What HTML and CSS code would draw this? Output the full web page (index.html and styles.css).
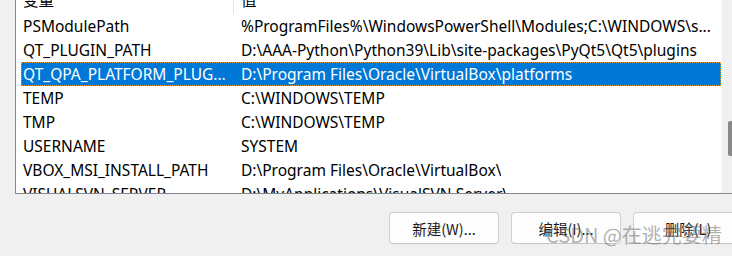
FILE: index.html
```html
<!DOCTYPE html>
<html lang="zh-CN">
<head>
    <meta charset="UTF-8">
    <title>环境变量</title>
    <link rel="stylesheet" href="styles.css">
</head>
<body>
    <div class="dialog">
        <div class="listbox">
            <div class="list">
                <div class="row head">
                    <span class="name">变量</span>
                    <span class="value">值</span>
                </div>
                <div class="row">
                    <span class="name">PSModulePath</span>
                    <span class="value">%ProgramFiles%\WindowsPowerShell\Modules;C:\WINDOWS\s...</span>
                </div>
                <div class="row">
                    <span class="name">QT_PLUGIN_PATH</span>
                    <span class="value">D:\AAA-Python\Python39\Lib\site-packages\PyQt5\Qt5\plugins</span>
                </div>
                <div class="row selected">
                    <span class="name">QT_QPA_PLATFORM_PLUG...</span>
                    <span class="value">D:\Program Files\Oracle\VirtualBox\platforms</span>
                </div>
                <div class="row">
                    <span class="name">TEMP</span>
                    <span class="value">C:\WINDOWS\TEMP</span>
                </div>
                <div class="row">
                    <span class="name">TMP</span>
                    <span class="value">C:\WINDOWS\TEMP</span>
                </div>
                <div class="row">
                    <span class="name">USERNAME</span>
                    <span class="value">SYSTEM</span>
                </div>
                <div class="row">
                    <span class="name">VBOX_MSI_INSTALL_PATH</span>
                    <span class="value">D:\Program Files\Oracle\VirtualBox\</span>
                </div>
                <div class="row">
                    <span class="name">VISUALSVN_SERVER</span>
                    <span class="value">D:\MyApplications\VisualSVN Server\</span>
                </div>
            </div>
            <div class="scrollbar">
                <div class="thumb"></div>
            </div>
        </div>

        <div class="buttons">
            <button class="btn">新建(W)...</button>
            <button class="btn">编辑(I)...</button>
            <button class="btn">删除(L)</button>
        </div>

        <!-- водяной знак -->
        <div class="watermark">CSDN @在逃完要精</div>
    </div>
</body>
</html>
```

FILE: styles.css
```css
body {
    margin: 0;
    padding: 0;
    background-color: #f0f0f0;
    font-family: "Segoe UI", "Noto Sans", "Noto Sans CJK SC", sans-serif;
    color: #000000;
    overflow: hidden;
}
.dialog {
    position: relative;
    width: 732px;
    height: 256px;
    overflow: hidden;
}
.listbox {
    display: flex;
    margin-left: 15px;
    margin-top: -10px;
    width: 740px;
    height: 203px;
    background-color: #ffffff;
    border-left: 1px solid #828790;
    border-bottom: 1px solid #828790;
    overflow: hidden;
}
.list {
    width: 700px;
    padding-left: 5px;
}
.row {
    display: flex;
    align-items: center;
    height: 24px;
    font-size: 15.5px;
    white-space: nowrap;
}
.row .name {
    width: 211px;
    padding-left: 2px;
    overflow: hidden;
}
.row .value {
    padding-left: 7px;
    overflow: hidden;
}
.row.head .name {
    border-right: 1px solid #e5e5e5;
    width: 210px;
    height: 24px;
    line-height: 21px;
}
.row.head .value {
    height: 24px;
    line-height: 21px;
}
.row.selected {
    background-color: #0078d7;
    color: #ffffff;
    outline: 1px dotted #f0a030;
    outline-offset: -1px;
}
.scrollbar {
    width: 17px;
    background-color: #f0f0f0;
    position: relative;
    border-left: 1px solid #f7f7f7;
}
.thumb {
    position: absolute;
    left: 6px;
    top: 131px;
    width: 6px;
    height: 35px;
    background-color: #8a8a8a;
    border-radius: 2px;
}
.buttons {
    display: flex;
    gap: 12px;
    margin-top: 18px;
    margin-left: 389px;
}
.btn {
    flex: none;
    width: 110px;
    height: 32px;
    font-family: "Noto Sans CJK SC", sans-serif;
    font-size: 14.5px;
    color: #1a1a1a;
    background-color: #fdfdfd;
    border: 1px solid #d0d0d0;
    border-bottom-color: #c4c4c4;
    border-radius: 4px;
    padding: 0;
}
.watermark {
    position: absolute;
    left: 546px;
    top: 220px;
    font-family: "Noto Sans CJK SC", sans-serif;
    font-size: 20px;
    color: rgba(110, 110, 110, 0.55);
    white-space: nowrap;
}
```
